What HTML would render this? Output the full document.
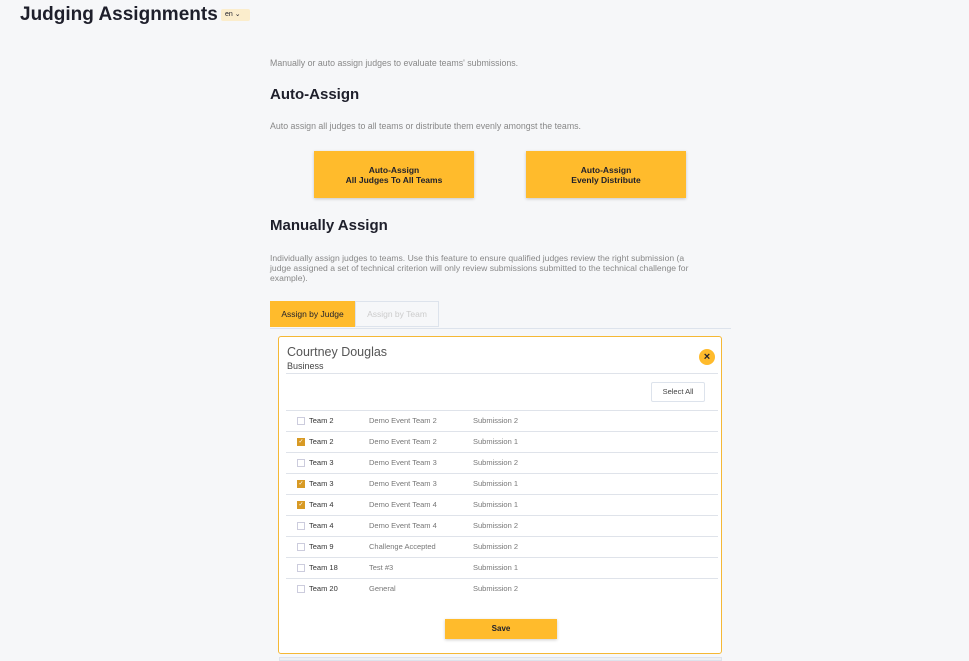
<!DOCTYPE html>
<html><head><style>
*{box-sizing:border-box;margin:0;padding:0}
body{width:969px;height:660px;background:#f6f7f9;font-family:"Liberation Sans",sans-serif;position:relative;overflow:hidden;color:#1e1f2b}
.a{position:absolute}
h1{position:absolute;left:20px;top:4px;font-size:19px;font-weight:bold;letter-spacing:0}
.lang{left:221px;top:9px;width:29px;height:12px;background:#fbedcc;border-radius:2px;font-size:7px;line-height:12px;padding-left:4px}
.p{font-size:8.8px;color:#888;left:270px;width:470px;line-height:10px;white-space:nowrap}
h2{position:absolute;left:270px;font-size:15px;font-weight:bold}
.btn{background:#ffbb2c;font-size:8.5px;font-weight:bold;text-align:center;box-shadow:0 1px 3px rgba(0,0,0,.2);display:flex;align-items:center;justify-content:center;line-height:10px}
.row{position:absolute;left:286px;width:432px;height:21px;border-top:1px solid #dfe3ea;font-size:7.5px;color:#777}
.row span{position:absolute;top:5px}
.cb{position:absolute;left:11px;top:6px;width:8px;height:8px;border:1px solid #ccd;background:#fff}
.cb.on{background:#d89a24;border-color:#d89a24;color:#fff;font-size:6px;line-height:6px;text-align:center}
</style></head><body>
<h1>Judging Assignments</h1>
<div class="a lang">en &#8964;</div>
<div class="a p" style="top:58px">Manually or auto assign judges to evaluate teams' submissions.</div>
<h2 style="top:86px">Auto-Assign</h2>
<div class="a p" style="top:121px">Auto assign all judges to all teams or distribute them evenly amongst the teams.</div>
<div class="a btn" style="left:314px;top:151px;width:160px;height:47px">Auto-Assign<br>All Judges To All Teams</div>
<div class="a btn" style="left:526px;top:151px;width:160px;height:47px">Auto-Assign<br>Evenly Distribute</div>
<h2 style="top:217px">Manually Assign</h2>
<div class="a p" style="top:253px;font-size:8.6px">Individually assign judges to teams. Use this feature to ensure qualified judges review the right submission (a<br>judge assigned a set of technical criterion will only review submissions submitted to the technical challenge for<br>example).</div>
<div class="a" style="left:270px;top:301px;width:85px;height:26px;background:#ffbb2c;font-size:8.5px;line-height:26px;text-align:center">Assign by Judge</div>
<div class="a" style="left:355px;top:301px;width:84px;height:26px;border:1px solid #dde3ec;font-size:8.5px;line-height:24px;text-align:center;color:#ccc">Assign by Team</div>
<div class="a" style="left:270px;top:328px;width:461px;height:1px;background:#dde3ec"></div>
<div class="a" style="left:279px;top:657px;width:443px;height:4px;background:#eef0f3;border:1px solid #dde3ec"></div>
<div class="a" style="left:278px;top:336px;width:444px;height:318px;background:#fff;border:1px solid #f5b835;border-radius:3px"></div>
<div class="a" style="left:287px;top:345px;font-size:12.5px;color:#555">Courtney Douglas</div>
<div class="a" style="left:287px;top:361px;font-size:9px;color:#444">Business</div>
<div class="a" style="left:699px;top:349px;width:16px;height:16px;border-radius:50%;background:#ffbb2c;font-size:11px;line-height:16px;text-align:center;font-weight:bold">&#215;</div>
<div class="a" style="left:286px;top:373px;width:432px;height:1px;background:#dfe3ea"></div>
<div class="a" style="left:651px;top:382px;width:54px;height:20px;border:1px solid #dde3ec;border-radius:2px;font-size:7.5px;line-height:18px;text-align:center;color:#444">Select All</div>
<div class="row" style="top:410px"><div class="cb"></div><span style="left:23px;color:#333">Team 2</span><span style="left:83px">Demo Event Team 2</span><span style="left:187px">Submission 2</span></div>
<div class="row" style="top:431px"><div class="cb on">✓</div><span style="left:23px;color:#333">Team 2</span><span style="left:83px">Demo Event Team 2</span><span style="left:187px">Submission 1</span></div>
<div class="row" style="top:452px"><div class="cb"></div><span style="left:23px;color:#333">Team 3</span><span style="left:83px">Demo Event Team 3</span><span style="left:187px">Submission 2</span></div>
<div class="row" style="top:473px"><div class="cb on">✓</div><span style="left:23px;color:#333">Team 3</span><span style="left:83px">Demo Event Team 3</span><span style="left:187px">Submission 1</span></div>
<div class="row" style="top:494px"><div class="cb on">✓</div><span style="left:23px;color:#333">Team 4</span><span style="left:83px">Demo Event Team 4</span><span style="left:187px">Submission 1</span></div>
<div class="row" style="top:515px"><div class="cb"></div><span style="left:23px;color:#333">Team 4</span><span style="left:83px">Demo Event Team 4</span><span style="left:187px">Submission 2</span></div>
<div class="row" style="top:536px"><div class="cb"></div><span style="left:23px;color:#333">Team 9</span><span style="left:83px">Challenge Accepted</span><span style="left:187px">Submission 2</span></div>
<div class="row" style="top:557px"><div class="cb"></div><span style="left:23px;color:#333">Team 18</span><span style="left:83px">Test #3</span><span style="left:187px">Submission 1</span></div>
<div class="row" style="top:578px"><div class="cb"></div><span style="left:23px;color:#333">Team 20</span><span style="left:83px">General</span><span style="left:187px">Submission 2</span></div>
<div class="a btn" style="left:445px;top:619px;width:112px;height:20px;font-size:8px">Save</div>
</body></html>
